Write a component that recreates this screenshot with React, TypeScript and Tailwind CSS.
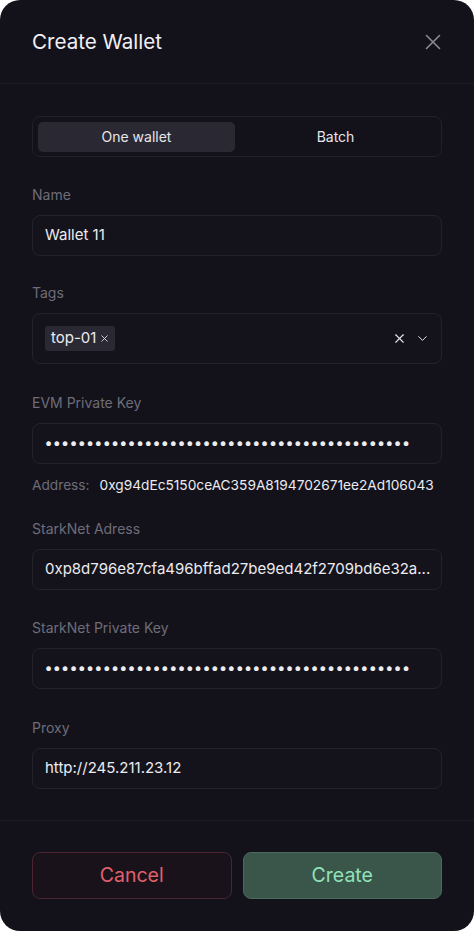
import { X, ChevronDown } from "lucide-react";

const dots = "•".repeat(44);

function Label({ children }: { children: string }) {
    return <p className="text-[14px] leading-5 text-[#6e6d78]">{children}</p>;
}

function Field({ children, className = "" }: { children: React.ReactNode; className?: string }) {
    return (
        <div className={`mt-[10px] flex h-[41px] items-center overflow-hidden whitespace-nowrap rounded-lg border border-[#24232d] bg-[#14131b] px-[12px] text-[15px] text-[#ecebf0] ${className}`}>
            {children}
        </div>
    );
}

function App() {
    return (
        <div className="min-h-[931px] bg-white font-['Inter',sans-serif]">
            <div className="flex h-[931px] flex-col rounded-[20px] bg-[#13121b]">
                {/* header */}
                <div className="flex h-[84px] items-center justify-between border-b border-[#1c1b25] pl-8 pr-[28px]">
                    <h1 className="pt-[2px] text-[20.6px] text-[#f1f0f4]">Create Wallet</h1>
                    <X size={26} strokeWidth={1.5} className="text-[#8b8a94]" />
                </div>

                <div className="flex-1 border-b border-[#1c1b25] px-8 pt-8">
                    {/* tabs */}
                    <div className="flex h-[41px] items-center rounded-lg border border-[#22212b] p-[5px] text-[14px] text-[#e6e5ea]">
                        <button className="h-[30px] w-[197px] rounded-[5px] bg-[#2a2933]">One wallet</button>
                        <button className="h-[30px] flex-1">Batch</button>
                    </div>

                    <div className="mt-[28px]">
                        <Label>Name</Label>
                        <Field>Wallet 11</Field>
                    </div>

                    <div className="mt-[27px]">
                        <Label>Tags</Label>
                        <Field className="h-[51px] justify-between pr-[11px]">
                            <span className="flex h-[25px] items-center gap-[3px] rounded-[3px] bg-[#2a2933] pl-[6px] pr-[5px] text-[15px]">
                                top-01
                                <X size={11} strokeWidth={1.8} />
                            </span>
                            <span className="flex items-center gap-[8px] text-[#e6e5ea]">
                                <X size={15} strokeWidth={1.8} />
                                <ChevronDown size={15} strokeWidth={1.6} />
                            </span>
                        </Field>
                    </div>

                    <div className="mt-[29px]">
                        <Label>EVM Private Key</Label>
                        <Field className="h-[40px] text-[14.8px] font-bold tracking-[1.2px]">{dots}</Field>
                        <p className="mt-[11px] flex gap-[10px] text-[13.7px] leading-5">
                            <span className="text-[#6e6d78]">Address:</span>
                            <span className="text-[#ecebf0]">0xg94dEc5150ceAC359A8194702671ee2Ad106043</span>
                        </p>
                    </div>

                    <div className="mt-[24px]">
                        <Label>StarkNet Adress</Label>
                        <Field className="text-[14.4px]">0xp8d796e87cfa496bffad27be9ed42f2709bd6e32a...</Field>
                    </div>

                    <div className="mt-[28px]">
                        <Label>StarkNet Private Key</Label>
                        <Field className="text-[14.8px] font-bold tracking-[1.2px]">{dots}</Field>
                    </div>

                    <div className="mt-[29px]">
                        <Label>Proxy</Label>
                        <Field className="h-[40px]">http://245.211.23.12</Field>
                    </div>
                </div>

                {/* footer */}
                <div className="flex h-[110px] gap-[11px] px-8 pt-[31px]">
                    <button className="h-[47px] flex-1 rounded-lg border border-[#4a2530] bg-[#1a121a] text-[19.5px] text-[#e0606c]">Cancel</button>
                    <button className="h-[47px] flex-1 rounded-lg border border-[#4a6a5c] bg-[#3a564b] text-[19.5px] text-[#8fe3b9]">Create</button>
                </div>
            </div>
        </div>
    );
}

export default App;
